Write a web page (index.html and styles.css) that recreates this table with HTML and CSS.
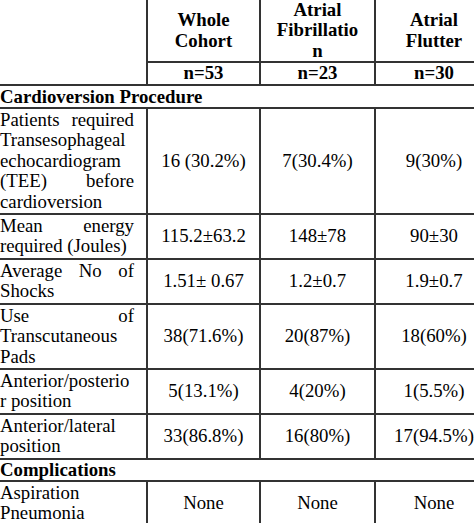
FILE: index.html
```html
<!DOCTYPE html>
<html>
<head>
<meta charset="utf-8">
<link rel="stylesheet" href="styles.css">
</head>
<body>
<table class="results">
  <colgroup>
    <col class="c-label">
    <col class="c-whole">
    <col class="c-af">
    <col class="c-fl">
  </colgroup>
  <tbody>
    <tr class="head">
      <td class="blank" rowspan="2"></td>
      <th>Whole Cohort</th>
      <th>Atrial Fibrillation</th>
      <th>Atrial Flutter</th>
    </tr>
    <tr class="counts">
      <th>n=53</th>
      <th>n=23</th>
      <th>n=30</th>
    </tr>
    <tr class="section first">
      <th colspan="4">Cardioversion Procedure</th>
    </tr>
    <tr>
      <td class="label">Patients required Transesophageal echocardiogram (TEE) before cardioversion</td>
      <td class="val">16 (30.2%)</td>
      <td class="val">7(30.4%)</td>
      <td class="val">9(30%)</td>
    </tr>
    <tr>
      <td class="label">Mean energy required (Joules)</td>
      <td class="val">115.2±63.2</td>
      <td class="val">148±78</td>
      <td class="val">90±30</td>
    </tr>
    <tr>
      <td class="label">Average No of Shocks</td>
      <td class="val">1.51± 0.67</td>
      <td class="val">1.2±0.7</td>
      <td class="val">1.9±0.7</td>
    </tr>
    <tr>
      <td class="label">Use of Transcutaneous Pads</td>
      <td class="val">38(71.6%)</td>
      <td class="val">20(87%)</td>
      <td class="val">18(60%)</td>
    </tr>
    <tr>
      <td class="label">Anterior/posterior position</td>
      <td class="val">5(13.1%)</td>
      <td class="val">4(20%)</td>
      <td class="val">1(5.5%)</td>
    </tr>
    <tr>
      <td class="label">Anterior/lateral position</td>
      <td class="val">33(86.8%)</td>
      <td class="val">16(80%)</td>
      <td class="val">17(94.5%)</td>
    </tr>
    <tr class="section">
      <th colspan="4">Complications</th>
    </tr>
    <tr>
      <td class="label">Aspiration Pneumonia</td>
      <td class="val">None</td>
      <td class="val">None</td>
      <td class="val">None</td>
    </tr>
  </tbody>
</table>
</body>
</html>
```
FILE: styles.css
```css
html, body {
  margin: 0;
  padding: 0;
  background: #ffffff;
  overflow: hidden;
}

.results {
  border-collapse: collapse;
  table-layout: fixed;
  width: 506px;
  margin: -2px 0 0 -14px;
  font-family: "Liberation Serif", "Times New Roman", serif;
  font-size: 18.8px;
  line-height: 20.4px;
  color: #000000;
}

.c-label { width: 160px; }
.c-whole { width: 113px; }
.c-af { width: 115px; }
.c-fl { width: 118px; }

.results td,
.results th {
  border: 2px solid #333333;
  padding: 1px 12px;
  vertical-align: middle;
  overflow-wrap: break-word;
}

.results th {
  font-weight: bold;
  text-align: center;
}

.head th,
.counts th {
  padding-top: 0;
  padding-bottom: 0;
}

.section th {
  text-align: left;
  padding-top: 0;
  padding-bottom: 0;
}

.section.first th {
  padding-top: 1px;
}

.label {
  text-align: justify;
}

.val {
  text-align: center;
}
```
